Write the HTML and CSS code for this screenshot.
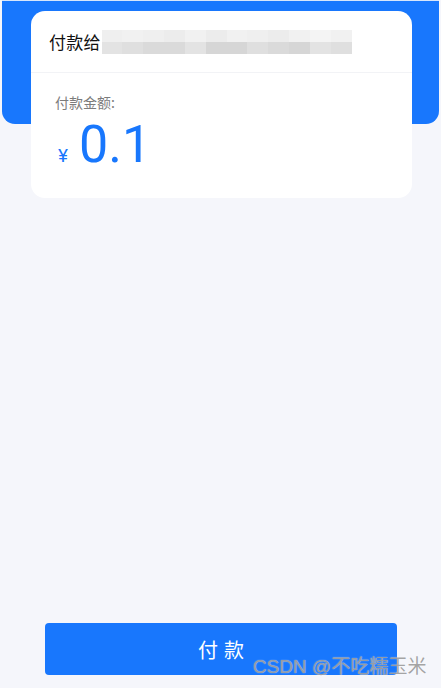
FILE: index.html
```html
<!DOCTYPE html>
<html lang="zh">
<head>
<meta charset="utf-8">
<title>付款</title>
<link rel="stylesheet" href="styles.css">
</head>
<body>
<div class="page">
  <div class="hero"></div>
  <div class="card">
    <div class="payee">
      <span class="payee-label">付款给</span>
      <div class="mosaic">
        <i class="t1"></i><i class="t2"></i><i class="t1"></i><i class="t3"></i><i class="t2"></i><i class="t3"></i><i class="t2"></i><i class="t1"></i><i class="t3"></i><i class="t2"></i><i class="t4"></i><i class="t2"></i>
        <i class="b1"></i><i class="b2"></i><i class="b3"></i><i class="b3"></i><i class="b1"></i><i class="b4"></i><i class="b4"></i><i class="b2"></i><i class="b3"></i><i class="b4"></i><i class="b1"></i><i class="b2"></i>
      </div>
    </div>
    <div class="amount-box">
      <div class="amount-label">付款金额:</div>
      <div class="amount">
        <span class="yen">¥</span>
        <span class="value">0.1</span>
      </div>
    </div>
  </div>
  <button class="pay-btn">付款</button>
  <div class="watermark">CSDN @不吃糯玉米</div>
</div>
</body>
</html>
```

FILE: styles.css
```css
* { box-sizing: border-box; }
html, body { margin: 0; padding: 0; }
body {
  background: #f5f6fb;
  font-family: "Noto Sans CJK SC", "Noto Sans", sans-serif;
}
.page {
  position: relative;
  height: 688px;
  display: flex;
  flex-direction: column;
}
.hero {
  height: 124px;
  margin: 0 2px;
  border-top: 1px solid #d8e6fb;
  background: #1877fd;
  border-radius: 0 0 13px 13px;
  flex-shrink: 0;
}
.card {
  margin: -113px 29px 0 31px;
  background: #ffffff;
  border-radius: 14px;
  height: 187px;
  display: flex;
  flex-direction: column;
}
.payee {
  height: 62px;
  border-bottom: 1px solid #f2f3f6;
  display: flex;
  align-items: center;
  padding-left: 18px;
}
.payee-label {
  font-size: 17px;
  color: #111;
  line-height: 24px;
  letter-spacing: 0.2px;
}
.mosaic {
  display: grid;
  grid-template-columns: repeat(12, 1fr);
  grid-template-rows: 12px 12px;
  width: 250px;
  margin-left: 1px;
}
.mosaic i { display: block; }
.t1 { background: #efefef; }
.t2 { background: #f1f1f1; }
.t3 { background: #ececec; }
.t4 { background: #f4f4f4; }
.b1 { background: #e3e3e3; }
.b2 { background: #dfdfdf; }
.b3 { background: #dadada; }
.b4 { background: #d6d6d6; }
.amount-box {
  padding: 19px 0 0 24px;
}
.amount-label {
  font-size: 14px;
  color: #7c7c7c;
  line-height: 20px;
}
.amount {
  display: flex;
  align-items: baseline;
  color: #1877fd;
  margin-top: 5px;
  padding-left: 3px;
}
.yen {
  font-family: "Roboto", "Noto Sans", sans-serif;
  font-size: 19px;
  margin-right: 11px;
}
.value {
  font-family: "Roboto", "Noto Sans", sans-serif;
  font-size: 52px;
  line-height: 56px;
}
.pay-btn {
  margin: auto 44px 13px 45px;
  height: 52px;
  border: none;
  border-radius: 4px;
  background: #1877fd;
  color: #fff;
  font-family: "Noto Sans CJK SC", sans-serif;
  font-size: 20px;
  letter-spacing: 6px;
  text-indent: 6px;
  padding: 0;
}
.watermark {
  position: absolute;
  left: 253px;
  top: 655px;
  font-family: "Liberation Sans", "Noto Sans CJK SC", sans-serif;
  font-size: 19px;
  line-height: 24px;
  color: rgba(140, 140, 140, 0.8);
  text-shadow: 0 0 1px rgba(255,255,255,0.8);
}
```
